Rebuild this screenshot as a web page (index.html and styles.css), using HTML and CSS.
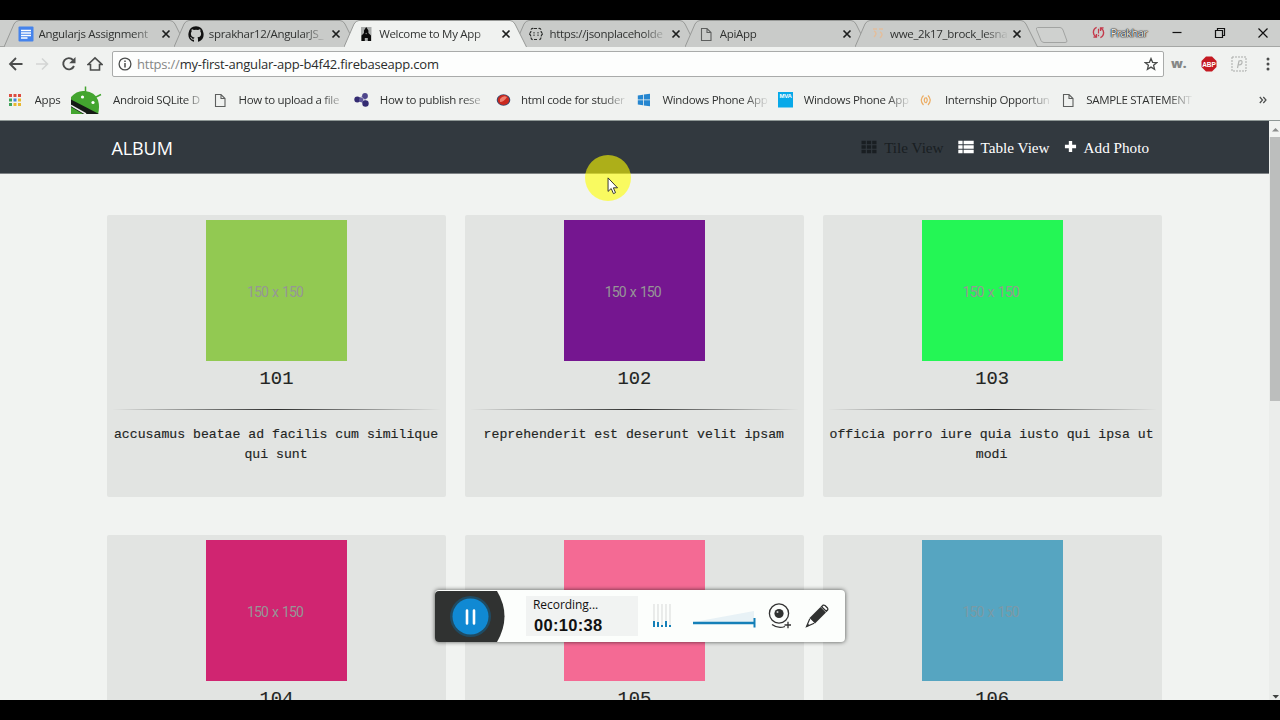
FILE: index.html
```html
<!DOCTYPE html>
<html lang="en">
    <head>
        <meta charset="UTF-8">
        <meta name="viewport" content="width=device-width, initial-scale=1.0">
        <title>Welcome to My App</title>
        <link rel="stylesheet" href="styles.css">
    </head>
<body>
    <svg class="defs">
        <symbol id="tab" viewBox="0 0 183 27"><path d="M0 27 L10 4 Q12 .5 15 .5 H166 Q169 .5 171 4 L182.5 27" stroke="#979997"/></symbol>
        <symbol id="close" viewBox="0 0 10 10"><path d="M1.5 1.5 L8.5 8.5 M8.5 1.5 L1.5 8.5" fill="none" stroke="#1d1f1e" stroke-width="1.7"/></symbol>
        <symbol id="page" viewBox="0 0 16 16"><path d="M2.5 2.5 H8 L12 6.5 V14.5 H2.5 Z M8 2.5 V6.5 H12" fill="none" stroke="#5d5f5e" stroke-width="1.1"/></symbol>
    </svg>

    <div class="screen">
        <div class="tabs">
            <div class="tab">
                <svg class="shape"><use href="#tab"/></svg>
                <svg class="icon" viewBox="0 0 16 16"><rect x=".5" y=".5" width="15" height="15" rx="1" fill="#4583ec"/><path d="M3 4.5 H13 M3 7 H13 M3 9.5 H13 M3 12 H9.5" stroke="#fff" stroke-width="1.3"/></svg>
                <span class="label">Angularjs Assignment</span>
                <svg class="close"><use href="#close"/></svg>
            </div>
            <div class="tab">
                <svg class="shape"><use href="#tab"/></svg>
                <svg class="icon" viewBox="0 0 16 16"><path fill="#111" d="M8 .3a8 8 0 0 0-2.6 15.4c.4.1.6-.2.6-.4v-1.6c-2.2.5-2.7-.9-2.7-.9-.4-.9-.9-1.2-.9-1.2-.7-.5.1-.5.1-.5.8.1 1.2.8 1.2.8.7 1.2 1.9.9 2.3.7.1-.5.3-.9.5-1.1-1.8-.2-3.6-.9-3.6-3.9 0-.9.3-1.6.8-2.2-.1-.2-.4-1 .1-2.1 0 0 .7-.2 2.2.8a7.5 7.5 0 0 1 4 0c1.5-1 2.2-.8 2.2-.8.4 1.1.2 1.9.1 2.1.5.6.8 1.3.8 2.2 0 3.1-1.9 3.7-3.7 3.9.3.3.6.8.6 1.5v2.3c0 .2.1.5.6.4A8 8 0 0 0 8 .3z"/></svg>
                <span class="label">sprakhar12/AngularJS_</span>
                <svg class="close"><use href="#close"/></svg>
            </div>
            <div class="tab active">
                <svg class="shape"><use href="#tab"/></svg>
                <svg class="icon" viewBox="0 0 16 16"><rect x="3" y="1" width="10.5" height="14" fill="#a9acab"/><path d="M8.2 1 L10.4 4.5 V7 L13 9.5 V15 H9.8 V12 H6.8 V15 H3.5 V9.500 L6 7 V4.5 Z" fill="#090909"/><circle cx="8.200" cy="7.5" r=".8" fill="#777"/></svg>
                <span class="label">Welcome to My App</span>
                <svg class="close"><use href="#close"/></svg>
            </div>
            <div class="tab">
                <svg class="shape"><use href="#tab"/></svg>
                <svg class="icon" viewBox="0 0 16 16"><path d="M5.5 2.5 Q3 2 3 4.5 Q3 7 .8 7.8 Q3 8.5 3 11.5 Q3 14 5.5 13.5 M10.5 2.5 Q13 2 13 4.5 Q13 7 15.2 7.8 Q13 8.5 13 11.5 Q13 14 10.5 13.5 M6 2.5 H10 M6 13.5 H10" fill="none" stroke="#2b2d2c" stroke-width="1.2" stroke-dasharray="3 1.2"/><path d="M6 6 V10.5 M10 6 V10.5" stroke="#2b2d2c" stroke-dasharray="1.5 1"/></svg>
                <span class="label">https://jsonplaceholde</span>
                <svg class="close"><use href="#close"/></svg>
            </div>
            <div class="tab">
                <svg class="shape"><use href="#tab"/></svg>
                <svg class="icon"><use href="#page"/></svg>
                <span class="label">ApiApp</span>
                <svg class="close"><use href="#close"/></svg>
            </div>
            <div class="tab">
                <svg class="shape"><use href="#tab"/></svg>
                <svg class="icon faint" viewBox="0 0 16 16"><path d="M4 3 H8 M5 5 Q9 7 5 11 M10 3 H14 M11 6 Q15 8 11 12" fill="none" stroke="#eeb98a" stroke-width="1.5"/></svg>
                <span class="label">wwe_2k17_brock_lesna</span>
                <svg class="close"><use href="#close"/></svg>
            </div>
            <svg class="new-tab" viewBox="0 0 34 16"><path d="M2.5 .5 H25 Q27 .5 28 3 L32 14 Q32 15.5 30 15.5 H9 Q7 15.5 6 13.5 L1.5 2.5 Q1 .5 2.5 .5" fill="#cfd1cf" stroke="#a2a4a2"/></svg>
            <div class="window-buttons">
                <svg class="sync" viewBox="0 0 14 14"><path d="M5 1.5 Q1.5 3 1.5 7 Q1.5 9.5 4 11.5 M1.5 12 H4.8 V8.5 M9 12.5 Q12.5 11 12.5 7 Q12.5 4.5 10 2.5 M12.5 2 H9.2 V5.5" fill="none" stroke="#c43a4b" stroke-width="1.5"/><path d="M7 3 V8 M7 9.5 V11" stroke="#c43a4b" stroke-width="1.3"/></svg>
                <span class="user">Prakhar</span>
                <svg class="min" viewBox="0 0 12 12"><path d="M1.5 5.5 H10.5" stroke="#111" stroke-width="1.2"/></svg>
                <svg class="max" viewBox="0 0 12 12"><path d="M1.5 3.5 H8.5 V10.5 H1.5 Z M3.5 3.5 V1.5 H10.5 V8.5 H8.5" fill="none" stroke="#111" stroke-width="1.2"/></svg>
                <svg class="exit" viewBox="0 0 12 12"><path d="M1.5 1.5 L10.5 10.5 M10.5 1.5 L1.5 10.5" stroke="#111" stroke-width="1.2"/></svg>
            </div>
        </div>

        <div class="toolbar">
            <svg class="nav-icon" viewBox="0 0 16 16"><path d="M14.5 8 H2.5 M8 2 L2 8 L8 14" fill="none" stroke="#4b4d4c" stroke-width="1.8"/></svg>
            <svg class="nav-icon" viewBox="0 0 16 16"><path d="M2 8 H13 M8 2.5 L13.5 8 L8 13.5" fill="none" stroke="#d3d5d4" stroke-width="1.6"/></svg>
            <svg class="nav-icon" viewBox="0 0 16 16"><path d="M13 10 A5.6 5.6 0 1 1 12 4" fill="none" stroke="#4b4d4c" stroke-width="1.9"/><path d="M14.5 1 V7.3 H8.2 Z" fill="#4b4d4c"/></svg>
            <svg class="nav-icon" viewBox="0 0 16 16"><path d="M1 8.5 L8 1.8 L15 8.5 H12.5 V14 H3.5 V8.5 Z" fill="none" stroke="#4b4d4c" stroke-width="1.6"/></svg>
            <div class="address">
                <svg class="info" viewBox="0 0 14 14"><circle cx="7" cy="7" r="5.9" fill="none" stroke="#4b4d4c" stroke-width="1.3"/><path d="M7 6 V10.5 M7 3.5 V5" stroke="#4b4d4c" stroke-width="1.5"/></svg>
                <span class="url"><i>https://</i>my-first-angular-app-b4f42.firebaseapp.com</span>
                <svg class="star" viewBox="0 0 14 14"><path d="M7 1.5 L8.6 5.3 L12.8 5.6 L9.6 8.3 L10.6 12.3 L7 10.1 L3.4 12.3 L4.4 8.3 L1.2 5.6 L5.4 5.3 Z" fill="none" stroke="#4b4d4c" stroke-width="1.3"/></svg>
            </div>
            <div class="extensions">
                <span class="w">w.</span>
                <svg class="abp" viewBox="0 0 16 16"><path d="M5 .5 H11 L15.5 5 V11 L11 15.5 H5 L.5 11 V5 Z" fill="#c41a22"/><text x="8" y="10.6" text-anchor="middle">ABP</text></svg>
                <svg class="p" viewBox="0 0 16 16"><rect x="1" y="1" width="14" height="14" fill="none" stroke="#a9aba9" stroke-dasharray="2 1"/><path d="M6.5 12 L8 5 Q11.5 3.5 11 7 Q10 9.5 7 8.5" fill="none" stroke="#b3b5b3" stroke-width="1.2"/></svg>
                <svg class="dots" viewBox="0 0 4 14"><circle cx="2" cy="2" r="1.5"/><circle cx="2" cy="7" r="1.5"/><circle cx="2" cy="12" r="1.5"/></svg>
            </div>
        </div>

        <div class="bookmarks">
            <div class="bookmark apps">
                <svg class="grid" viewBox="0 0 14 14"><path d="M1 2.5 H4 M5.5 2.5 H8.5 M10 2.5 H13" stroke="#dc4c40" stroke-width="3"/><path d="M1 7 H4" stroke="#3fa45b" stroke-width="3"/><path d="M5.5 7 H8.5" stroke="#4285dd" stroke-width="3"/><path d="M10 7 H13" stroke="#e8b830" stroke-width="3"/><path d="M1 11.5 H4" stroke="#3fa45b" stroke-width="3"/><path d="M5.5 11.5 H13" stroke="#e8b830" stroke-width="3" stroke-dasharray="3 1.5"/></svg>
                <span>Apps</span>
            </div>
            <div class="bookmark first">
                <svg class="android" viewBox="0 0 31 29"><path d="M0 11 Q6 4 14 5 Q24 6 27 14 Q29 21 27 28 H0 Z" fill="#43a52f"/><path d="M0 13.5 L28 28 H0 Z" fill="#161a16"/><path d="M0 19.5 L15 28" stroke="#eef1ee" stroke-width="1.5"/><path d="M0 21 L12 28 H0 Z" fill="#43a52f"/><path d="M14.5 6 V.5 M24 11.5 L30 8.5" stroke="#43a52f" stroke-width="1.5"/><circle cx="11.5" cy="11" r="1.6" fill="#fff"/><circle cx="22" cy="16.5" r="1.6" fill="#fff"/></svg>
                <span>Android SQLite D</span>
            </div>
            <div class="bookmark"><svg class="icon"><use href="#page"/></svg><span>How to upload a file</span></div>
            <div class="bookmark">
                <svg class="icon" viewBox="0 0 16 16"><path d="M3 7 L11 3.5 M3 7 L11 12 M11 4 V12" stroke="#8a87b5"/><circle cx="3.3" cy="7.5" r="3" fill="#342c72"/><circle cx="11" cy="4" r="2.9" fill="#4e468b"/><circle cx="11.5" cy="11.5" r="3.2" fill="#342c72"/><circle cx="7.2" cy="8" r="2.3" fill="#5f589b"/></svg>
                <span>How to publish rese</span>
            </div>
            <div class="bookmark">
                <svg class="icon" viewBox="0 0 16 16"><ellipse cx="7.5" cy="8" rx="6.8" ry="5.8" fill="#3d4a6e"/><ellipse cx="7.5" cy="8" rx="5.7" ry="5" fill="#cb291f"/><path d="M4 7 Q7 3 11 5 Q8 10 4 10 Z" fill="#ee806f"/></svg>
                <span>html code for studer</span>
            </div>
            <div class="bookmark">
                <svg class="icon" viewBox="0 0 16 16"><path d="M.8 3.5 L6 2.8 V7.5 H.8 Z M6.8 2.6 L13 1.8 V7.5 H6.8 Z M.8 8.3 H6 V13.2 L.8 12.5 Z M6.8 8.3 H13 V14.2 L6.8 13.4 Z" fill="#2586d0"/></svg>
                <span>Windows Phone App</span>
            </div>
            <div class="bookmark">
                <svg class="icon mva" viewBox="0 0 16 16"><rect width="15" height="15.5" fill="#08a9e9"/><text x="7.5" y="6.2" text-anchor="middle">MVA</text></svg>
                <span>Windows Phone App</span>
            </div>
            <div class="bookmark">
                <svg class="icon" viewBox="0 0 16 16"><path d="M4.5 3.5 Q0 8 4.5 13 M9 3.5 Q13.5 8 9 13 M6.5 5.5 Q4 8 6.5 11 M7 5.5 Q9.5 8 7 11" fill="none" stroke="#ecac62" stroke-width="1.2"/></svg>
                <span>Internship Opportun</span>
            </div>
            <div class="bookmark"><svg class="icon"><use href="#page"/></svg><span>SAMPLE STATEMENT</span></div>
            <svg class="more" viewBox="0 0 8 8"><path d="M.8 1 L3.5 4 L.8 7 M4.3 1 L7 4 L4.3 7" fill="none" stroke="#4b4d4c" stroke-width="1.2"/></svg>
        </div>

        <div class="viewport">
            <div class="page">
                <nav class="navbar">
                    <span class="brand">ALBUM</span>
                    <div class="links">
                        <a class="current"><svg viewBox="0 0 16 14"><path d="M.5 2.5 H15.5 M.5 7 H15.5 M.5 11.5 H15.5" stroke="currentColor" stroke-width="3.5" stroke-dasharray="4.3 1.05"/></svg><span>Tile View</span></a>
                        <a><svg viewBox="0 0 16 14"><path d="M.3 2.5 H4.6 M5.6 2.5 H15.7 M.3 7 H4.6 M5.6 7 H15.7 M.3 11.5 H4.6 M5.6 11.5 H15.7" stroke="currentColor" stroke-width="3.7"/></svg><span>Table View</span></a>
                        <a class="add"><svg viewBox="0 0 14 14"><path d="M7 1 V13 M1 7 H13" stroke="currentColor" stroke-width="3.6"/></svg><span>Add Photo</span></a>
                    </div>
                </nav>
                <div class="album">
                    <div class="card">
                        <div class="thumb green">150 x 150</div>
                        <h4>101</h4>
                        <hr>
                        <p>accusamus beatae ad facilis cum similique qui sunt</p>
                    </div>
                    <div class="card">
                        <div class="thumb purple">150 x 150</div>
                        <h4>102</h4>
                        <hr>
                        <p>reprehenderit est deserunt velit ipsam</p>
                    </div>
                    <div class="card">
                        <div class="thumb lime">150 x 150</div>
                        <h4>103</h4>
                        <hr>
                        <p>officia porro iure quia iusto qui ipsa ut modi</p>
                    </div>
                    <div class="card">
                        <div class="thumb magenta">150 x 150</div>
                        <h4>104</h4>
                    </div>
                    <div class="card">
                        <div class="thumb pink"></div>
                        <h4>105</h4>
                    </div>
                    <div class="card">
                        <div class="thumb blue">150 x 150</div>
                        <h4>106</h4>
                    </div>
                </div>
            </div>
            <div class="scrollbar">
                <svg class="up" viewBox="0 0 11 16"><path d="M3 10.5 L6.5 7 L10 10.5 Z" fill="#8b8d8c"/></svg>
                <div class="handle"></div>
                <svg class="down" viewBox="0 0 11 6"><path d="M3.5 1 H10 L6.8 4.5 Z" fill="#3f4140"/></svg>
            </div>
        </div>
    </div>

    <div class="recorder">
        <div class="pause">
            <svg viewBox="0 0 71 51"><path d="M4 0 H62 Q77 25 62 51 H4 Q0 51 0 47 V4 Q0 0 4 0" fill="#303231"/><circle cx="35.5" cy="25.5" r="20.5" fill="#204b62"/><circle cx="35.5" cy="25.5" r="18" fill="#1089d3"/><path d="M32 19.5 V32.5 M39 19.5 V32.5" stroke="#fff" stroke-width="2.6" stroke-linecap="round"/></svg>
        </div>
        <div class="time">
            <span>Recording...</span>
            <b>00:10:38</b>
        </div>
        <svg class="levels" viewBox="0 0 18 24"><path d="M1 0 V23 M5 0 V23 M9 0 V23 M13 0 V23 M17 0 V23" stroke="#d7d9d8"/><path d="M1 17 V23 M5 18 V23 M9 21 V23 M13 17 V23 M17 21 V23" stroke="#1580b8" stroke-width="2"/></svg>
        <svg class="volume" viewBox="0 0 63 18"><path d="M1 12 L61 1 V12 Z" fill="#e8f2f6"/><path d="M0 13 H61" stroke="#1580b8" stroke-width="2.5"/><path d="M61.5 8 V17.5" stroke="#1580b8" stroke-width="2"/></svg>
        <svg class="webcam" viewBox="0 0 24 26"><circle cx="11" cy="10.5" r="9.6" fill="none" stroke="#333" stroke-width="1.3"/><circle cx="11" cy="10.5" r="4.6" fill="#303231"/><circle cx="9.5" cy="9" r="1" fill="#ccc"/><path d="M4 21.5 Q10 26 17 23.5 M16.5 22 H23 M20 18.8 V25.2" fill="none" stroke="#333" stroke-width="1.3"/></svg>
        <svg class="pencil" viewBox="0 0 24 24"><path d="M4.5 14 L15.5 3 L21 8.5 L10 19.5 Z" fill="#303231"/><path d="M4.8 14.8 L1.5 22.5 L9.2 19.2" fill="#fff" stroke="#303231" stroke-width="1.2"/><path d="M1.2 23 L2.8 19.5 L4.7 21.5 Z" fill="#303231"/><path d="M16.5 2.7 L18 1.2 Q19 .8 20 1.5 L22.5 4 Q23.2 5 22.7 5.8 L21.3 7.3 Z" fill="#fff" stroke="#303231" stroke-width="1.3"/></svg>
    </div>

    <div class="pointer">
        <svg viewBox="0 0 13 20"><path d="M1 1 V16 L4.5 12.8 L7 18.5 L9.3 17.4 L6.9 12 H11.5 Z" fill="#fff" stroke="#222"/></svg>
    </div>
</body>
</html>
```
FILE: styles.css
```css
* {
    box-sizing: border-box;
}

body {
    margin: 0;
    padding: 20px 0;
    width: 1280px;
    height: 720px;
    background-color: black;
    position: relative;
    overflow: hidden;
    font-family: "Open Sans", sans-serif;
}

svg {
    display: block;
    flex-shrink: 0;
}

.defs {
    width: 0;
    height: 0;
    position: absolute;
}

.screen {
    height: 680px;
    display: flex;
    flex-direction: column;
    background-color: #f0f2f0;
    overflow: hidden;
}

/* tab strip */
.tabs {
    height: 27px;
    display: flex;
    flex-shrink: 0;
    padding-left: 3.5px;
    background-color: #cdcfcd;
    border-bottom: 1px solid #a5a7a5;
}

.tab {
    width: 183px;
    height: 27px;
    margin-right: -12.7px;
    padding-left: 14px;
    display: flex;
    align-items: center;
    flex-shrink: 0;
    position: relative;
    font-size: 11.5px;
    color: #303231;
    fill: #c9cbc9;
}

.tab.active {
    z-index: 2;
    fill: #f0f2f0;
}

.tab .shape {
    position: absolute;
    left: 0;
    top: 0;
    width: 183px;
    height: 27px;
}

.tab > * {
    position: relative;
}

.icon {
    width: 16px;
    height: 16px;
}

.faint {
    opacity: .7;
}

.label {
    width: 118px;
    margin: 0 4px 0 5px;
    letter-spacing: -.32px;
    white-space: nowrap;
    -webkit-mask-image: linear-gradient(to right, black 94px, rgba(0, 0, 0, .1) 116px);
    mask-image: linear-gradient(to right, black 94px, rgba(0, 0, 0, .1) 116px);
}

.close {
    width: 10px;
    height: 10px;
}

.new-tab {
    width: 34px;
    height: 16px;
    margin: 7px 0 0 9.5px;
}

.window-buttons {
    margin-left: 23.5px;
    flex: 1;
    height: 25px;
    display: flex;
    align-items: center;
}

.sync {
    width: 13px;
    height: 13px;
}

.user {
    width: 36px;
    margin: 0 25px 0 5px;
    font-size: 11px;
    letter-spacing: -.5px;
    color: #eee;
    text-shadow: 0 0 1px #222, 0 0 1px #222, 0 0 1px #222, 0 0 2px #444;
}

.min, .max, .exit {
    width: 12px;
    height: 12px;
}

.min {
    margin: 0 31px 0 -.5px;
}

.exit {
    margin-left: 31px;
}

/* address row */
.toolbar {
    height: 34px;
    flex-shrink: 0;
    display: flex;
    align-items: center;
    padding-left: 8px;
}

.nav-icon {
    width: 16px;
    height: 16px;
    margin-right: 10.3px;
}

.address {
    width: 1052px;
    height: 26px;
    margin-left: -1.2px;
    padding: 0 5px;
    display: flex;
    align-items: center;
    background-color: #fdfefd;
    border: 1px solid #a9abaa;
    border-radius: 2px;
}

.info, .star {
    width: 14px;
    height: 14px;
}

.url {
    flex: 1;
    margin-left: 5px;
    font-size: 13px;
    letter-spacing: -.21px;
    color: #2b2d2c;
    white-space: nowrap;
}

.url i {
    font-style: normal;
    color: #858786;
}

.extensions {
    display: flex;
    align-items: center;
    flex: 1;
}

.w {
    width: 16px;
    margin-left: 7px;
    padding-bottom: 2px;
    font-size: 13px;
    line-height: 14px;
    font-weight: 800;
    color: #858786;
}

.abp {
    width: 16px;
    height: 16px;
    margin-left: 14px;
}

.abp text {
    font: bold 6.5px "Liberation Sans", sans-serif;
    fill: #fff;
}

.p {
    width: 16px;
    height: 16px;
    margin-left: 14px;
}

.dots {
    width: 4px;
    height: 14px;
    margin-left: 19px;
    fill: #4b4d4c;
}

/* bookmarks */
.bookmarks {
    height: 40px;
    flex-shrink: 0;
    display: flex;
    align-items: center;
    padding: 0 0 1px 8px;
    border-bottom: 1px solid #8f9896;
    font-size: 11.5px;
    letter-spacing: -.33px;
    color: #303231;
}

.bookmark {
    width: 141.3px;
    display: flex;
    align-items: center;
    flex-shrink: 0;
}

.bookmark span {
    width: 107px;
    margin-left: 9.5px;
    padding-bottom: 2px;
    white-space: nowrap;
    -webkit-mask-image: linear-gradient(to right, black 82px, rgba(0, 0, 0, .1) 105px);
    mask-image: linear-gradient(to right, black 82px, rgba(0, 0, 0, .1) 105px);
}

.bookmark.apps {
    width: 63px;
}

.bookmark.apps span {
    margin-left: 12.5px;
    width: 36px;
    letter-spacing: -.2px;
}

.grid {
    width: 14px;
    height: 14px;
}

.bookmark.first {
    width: 142px;
}

.bookmark.first span {
    margin-left: 11px;
    width: 94px;
    -webkit-mask-image: linear-gradient(to right, black 72px, rgba(0, 0, 0, .15) 90px);
    mask-image: linear-gradient(to right, black 72px, rgba(0, 0, 0, .15) 90px);
}

.android {
    width: 31px;
    height: 29px;
}

.mva text {
    font: bold 6px "Liberation Sans", sans-serif;
    fill: #fff;
}

.more {
    width: 8px;
    height: 8px;
    margin-left: 57px;
}

/* app */
.viewport {
    flex: 1;
    min-height: 0;
    display: flex;
}

.page {
    width: 1269px;
    overflow: hidden;
    background-color: #f1f3f1;
}

.navbar {
    height: 53px;
    padding: 1px 120px 0 111.5px;
    display: flex;
    align-items: center;
    justify-content: space-between;
    background-color: #32393f;
    border-bottom: 1px solid #7d8184;
    color: #fff;
}

.brand {
    font-size: 18px;
    letter-spacing: -.1px;
}

.links {
    display: flex;
    font-family: "Liberation Serif", serif;
    font-size: 15.2px;
}

.links a {
    display: flex;
    align-items: center;
    margin-left: 14px;
}

.links svg {
    width: 16px;
    height: 14px;
    margin: -2px 7px 0 0;
}

.links .add svg {
    width: 13px;
    height: 15px;
}

.links .current {
    color: #191e22;
}

.album {
    padding: 41px 0 0 107px;
    display: grid;
    grid-template-columns: repeat(3, 339px);
    grid-auto-rows: 282px;
    gap: 38px 18.8px;
}

.card {
    padding: 5px;
    background-color: #e2e4e2;
    border-radius: 2px;
    text-align: center;
    font-family: "Liberation Mono", monospace;
    color: #222423;
    -webkit-text-stroke: .15px #222423;
}

.thumb {
    width: 141px;
    height: 141px;
    margin: 0 auto;
    padding: 3px 3px 0 0;
    display: grid;
    place-items: center;
    font-family: Roboto, sans-serif;
    font-size: 14px;
    letter-spacing: -.9px;
    word-spacing: 1.5px;
    color: #969696;
    -webkit-text-stroke: 0;
}

.green {
    background-color: #92c952;
}

.purple {
    background-color: #751690;
}

.lime {
    background-color: #24f655;
}

.magenta {
    background-color: #d02571;
}

.pink {
    background-color: #f46a94;
}

.blue {
    background-color: #56a5c1;
}

.blue.thumb {
    color: #7b9aa4;
}

.card h4 {
    margin: 8px 0 19px;
    font-size: 18.8px;
    font-weight: 500;
    line-height: 21px;
}

.card hr {
    height: 1px;
    margin: 0;
    border: 0;
    background-image: linear-gradient(to right, rgba(0, 0, 0, 0), rgba(0, 0, 0, .8), rgba(0, 0, 0, 0));
}

.card p {
    margin: 15px 0 0;
    padding-right: 1px;
    font-size: 13.18px;
    line-height: 20px;
}

.scrollbar {
    width: 11px;
    display: flex;
    flex-direction: column;
    background-color: #ebedeb;
}

.up {
    width: 11px;
    height: 16px;
    background-color: #f1f3f1;
}

.handle {
    height: 264px;
    margin-left: 1px;
    background-color: #bcbebd;
}

.down {
    width: 11px;
    height: 6px;
    margin-top: auto;
}

/* recorder floats over the page */
.recorder {
    position: absolute;
    left: 435px;
    top: 590px;
    width: 410px;
    height: 52px;
    display: flex;
    align-items: center;
    background-color: #fcfefc;
    border-radius: 4px;
    box-shadow: 0 0 4px rgba(0, 0, 0, .65);
}

.pause {
    width: 71px;
    height: 51px;
}

.time {
    width: 112px;
    height: 40px;
    margin-left: 20px;
    padding: 0 0 0 7px;
    display: flex;
    flex-direction: column;
    background-color: #f1f3f2;
    color: #111;
    font-size: 12px;
    letter-spacing: -.05px;
    line-height: 17px;
}

.time b {
    margin-top: 3px;
    padding-left: 1px;
    font-family: "Liberation Sans", sans-serif;
    font-size: 16.5px;
    letter-spacing: .3px;
    line-height: 19px;
}

.levels {
    width: 18px;
    height: 24px;
    margin-left: 14.5px;
}

.volume {
    width: 63px;
    height: 18px;
    margin: 5px 0 0 22px;
}

.webcam {
    width: 24px;
    height: 26px;
    margin-left: 12px;
}

.pencil {
    width: 24px;
    height: 24px;
    margin-left: 13.5px;
}

.pointer {
    position: absolute;
    left: 585px;
    top: 155px;
    width: 46px;
    height: 46px;
    padding: 22px 0 0 22px;
    border-radius: 50%;
    background-color: rgba(255, 255, 0, .6);
}

.pointer svg {
    width: 12px;
    height: 18px;
}
```
